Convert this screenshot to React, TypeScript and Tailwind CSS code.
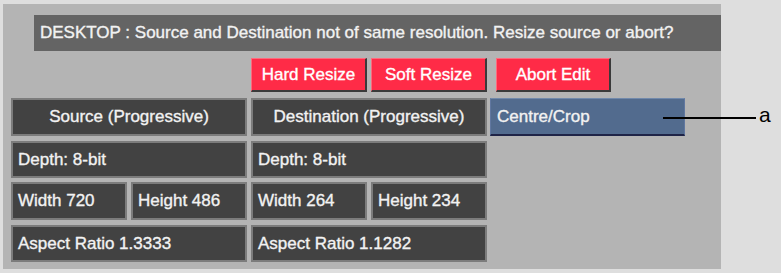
const font = { fontFamily: '"Liberation Sans", Arial, sans-serif' }

const txt = 'text-[#f2f2f2] text-[17px] [-webkit-text-stroke:0.35px_#f2f2f2]'

function Cell({ children, w, center = false }: { children: React.ReactNode; w: string; center?: boolean }) {
    return (
        <div
            className={`${w} h-full bg-[#424242] border-2 border-[#7c7c7c] ${txt} flex items-center ${center ? 'justify-center' : 'pl-[5px]'}`}
        >
            {children}
        </div>
    )
}

function RedButton({ label, w }: { label: string; w: string }) {
    return (
        <button className={`${w} h-[34px] bg-[#ff2b47] text-white text-[17px] [-webkit-text-stroke:0.35px_#ffffff] border-t border-l border-[#ff6a7c] border-b-2 border-r-2 border-b-[#3a3a3a] border-r-[#3a3a3a] flex items-center justify-center`}>
            {label}
        </button>
    )
}

export default function App() {
    return (
        <div className="w-[781px] h-[273px] bg-[#dedede] pt-[4px] pl-[3px] relative" style={font}>
            <div className="w-[718px] h-[265px] bg-[#b4b4b4] pt-[11px]">
                {/* title */}
                <div className={`ml-[31px] h-[36px] bg-[#646464] ${txt} flex items-center pl-[6px]`}>
                    DESKTOP : Source and Destination not of same resolution. Resize source or abort?
                </div>

                {/* buttons */}
                <div className="mt-[7px] ml-[248px] flex gap-[4px]">
                    <RedButton label="Hard Resize" w="w-[116px]" />
                    <RedButton label="Soft Resize" w="w-[116px]" />
                    <div className="w-[1px]" />
                    <RedButton label="Abort Edit" w="w-[115px]" />
                </div>

                <div className="ml-[8px] mt-[6px] flex flex-col">
                    <div className="h-[38px] flex gap-[4px]">
                        <Cell w="w-[236px]" center>Source (Progressive)</Cell>
                        <Cell w="w-[236px]" center>Destination (Progressive)</Cell>
                        <div className={`w-[195px] h-full ml-[-1px] bg-[#526b8e] border-t border-t-[#7189ab] border-b-2 border-b-[#1f2447] border-x border-x-[#6077a0] ${txt} flex items-center pl-[6px]`}>
                            Centre/Crop
                        </div>
                    </div>
                    <div className="h-[37px] mt-[5px] flex gap-[4px]">
                        <Cell w="w-[236px]">Depth: 8-bit</Cell>
                        <Cell w="w-[236px]">Depth: 8-bit</Cell>
                    </div>
                    <div className="h-[38px] mt-[4px] flex gap-[4px]">
                        <Cell w="w-[116px]">Width 720</Cell>
                        <Cell w="w-[116px]">Height 486</Cell>
                        <Cell w="w-[116px]">Width 264</Cell>
                        <Cell w="w-[116px]">Height 234</Cell>
                    </div>
                    <div className="h-[37px] mt-[5px] flex gap-[4px]">
                        <Cell w="w-[236px]">Aspect Ratio 1.3333</Cell>
                        <Cell w="w-[236px]">Aspect Ratio 1.1282</Cell>
                    </div>
                </div>
            </div>

            {/* callout */}
            <div className="absolute left-[663px] top-[117px] w-[93px] h-[2px] bg-black" />
            <div className="absolute left-[759px] top-[104px] text-[21px] leading-none text-black">a</div>
        </div>
    )
}
